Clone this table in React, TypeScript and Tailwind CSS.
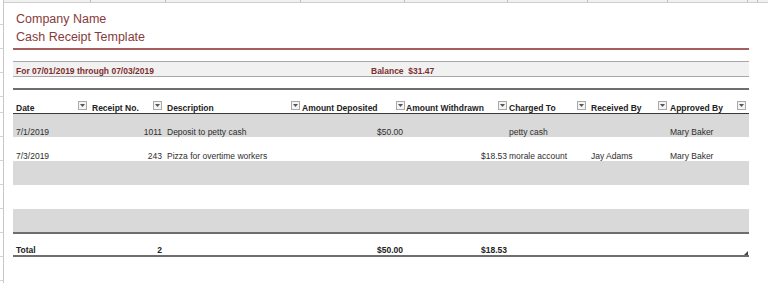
const font = { fontFamily: '"Liberation Sans", Arial, sans-serif' };

const cols = [
  { w: "w-[76px]", label: "Date", hpl: "pl-[3px]", bmr: "mr-[2px]", align: "justify-start pl-[3px]" },
  { w: "w-[75px]", label: "Receipt No.", hpl: "pl-[3px]", bmr: "mr-[2px]", align: "justify-end pr-[2px]" },
  { w: "w-[137px]", label: "Description", hpl: "pl-[3px]", bmr: "mr-[1px]", align: "justify-start pl-[3px]" },
  { w: "w-[105px]", label: "Amount Deposited", hpl: "pl-[1px]", bmr: "mr-[1px]", align: "justify-end pr-[3px]" },
  { w: "w-[102px]", label: "Amount Withdrawn", hpl: "pl-0", bmr: "mr-[1px]", align: "justify-end pr-[1px]" },
  { w: "w-[81px]", label: "Charged To", hpl: "pl-[1px]", bmr: "mr-[3px]", align: "justify-start pl-[1px]" },
  { w: "w-[79px]", label: "Received By", hpl: "pl-[2px]", bmr: "mr-[1px]", align: "justify-start pl-[2px]" },
  { w: "w-[81px]", label: "Approved By", hpl: "pl-[2px]", bmr: "mr-[3px]", align: "justify-start pl-[2px]" },
];

const rows = [
  { bg: "bg-[#d9d9d9]", h: "h-[23px]", cells: ["7/1/2019", "1011", "Deposit to petty cash", "$50.00", "", "petty cash", "", "Mary Baker"] },
  { bg: "bg-white", h: "h-[24px]", cells: ["7/3/2019", "243", "Pizza for overtime workers", "", "$18.53", "morale account", "Jay Adams", "Mary Baker"] },
  { bg: "bg-[#d9d9d9]", h: "h-[24px]", cells: ["", "", "", "", "", "", "", ""] },
  { bg: "bg-white", h: "h-[24px]", cells: ["", "", "", "", "", "", "", ""] },
  { bg: "bg-[#d9d9d9]", h: "h-[23px]", cells: ["", "", "", "", "", "", "", ""] },
];

const totals = ["Total", "2", "", "$50.00", "$18.53", "", "", ""];

const topTicks = ["w-[87px]", "w-[75px]", "w-[135px]", "w-[104px]", "w-[103px]", "w-[80px]", "w-[80px]", "w-[80px]", "w-[10px]"];
const sideTicks = ["h-[25px]", "h-[24px]", "h-[24px]", "h-[24px]", "h-[16px]", "h-[24px]", "h-[24px]", "h-[24px]", "h-[24px]", "h-[24px]", "h-[24px]", "h-[24px]"];

function FilterButton({ className }: { className: string }) {
  return (
    <div className={`mb-[3px] flex h-[9px] w-[9px] shrink-0 items-center justify-center border border-[#a9a9a9] bg-[#f4f4f4] ${className}`}>
      <svg width="5" height="3" viewBox="0 0 5 3">
        <path d="M0 0 L5 0 L2.5 3 Z" fill="#555" />
      </svg>
    </div>
  );
}

export default function App() {
  return (
    <div className="flex h-[283px] w-[768px] overflow-hidden bg-white" style={font}>
      {/* row header strip */}
      <div className="flex w-[4px] shrink-0 flex-col border-r border-[#c8c8c8]">
        {sideTicks.map((h, i) => (
          <div key={i} className={`${h} shrink-0 border-b border-[#d4d4d4]`} />
        ))}
      </div>

      <div className="flex flex-1 flex-col">
        {/* column header strip */}
        <div className="flex h-[3px] shrink-0 border-b border-[#cfcfcf] bg-[#f1f1f1]">
          {topTicks.map((w, i) => (
            <div key={i} className={`${w} shrink-0 border-r border-[#bdbdbd]`} />
          ))}
        </div>

        <div className="ml-[9px] mt-[7px] w-[736px]">
          <div className="pl-[3px] text-[12.5px] leading-[18px] text-[#883b3b]">
            <div>Company Name</div>
            <div>Cash Receipt Template</div>
          </div>
          <div className="mt-[2px] border-b-2 border-[#a35f5f]" />

          <div className="mt-[11px] flex h-[16px] items-end border-y border-[#a8a8a8] bg-[#f1f1f1] pl-[3px] text-[8.5px] font-bold leading-[10px] text-[#7d2e2e]">
            <span className="w-[355px]">For 07/01/2019 through 07/03/2019</span>
            <span>Balance&nbsp;&nbsp;$31.47</span>
          </div>

          <div className="mt-[11px] border-b-2 border-[#6e6e6e]" />

          {/* header row */}
          <div className="flex h-[24px] border-b border-[#3a3a3a]">
            {cols.map((c) => (
              <div key={c.label} className={`${c.w} flex items-end justify-between`}>
                <span className={`${c.hpl} whitespace-nowrap text-[8.5px] font-bold leading-[10px] text-[#222]`}>{c.label}</span>
                <FilterButton className={c.bmr} />
              </div>
            ))}
          </div>

          {rows.map((r, ri) => (
            <div key={ri} className={`flex ${r.h} ${r.bg}`}>
              {r.cells.map((t, ci) => (
                <div key={ci} className={`${cols[ci].w} flex items-end ${cols[ci].align} whitespace-nowrap text-[8.5px] leading-[10px] text-[#2e2e2e]`}>
                  {t}
                </div>
              ))}
            </div>
          ))}

          <div className="border-b-2 border-[#6e6e6e]" />

          {/* totals */}
          <div className="flex h-[23px] border-b-2 border-[#6e6e6e]">
            {totals.map((t, ci) => (
              <div key={ci} className={`${cols[ci].w} flex items-end ${cols[ci].align} whitespace-nowrap text-[8.5px] font-bold leading-[10px] text-[#222]`}>
                {t}
                {ci === 7 && (
                  <div className="ml-auto mb-[0px] mr-[1px]">
                    <svg width="4" height="4" viewBox="0 0 4 4">
                      <path d="M4 0 L4 4 L0 4 Z" fill="#444" />
                    </svg>
                  </div>
                )}
              </div>
            ))}
          </div>
        </div>
      </div>
    </div>
  );
}
